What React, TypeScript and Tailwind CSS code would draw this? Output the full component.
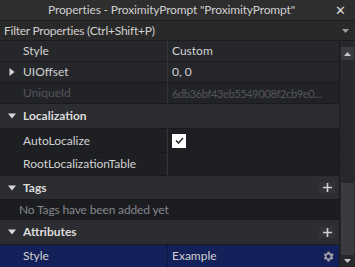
import React from "react";

const font = { fontFamily: "Lato, 'Open Sans', sans-serif" };

const Caret = ({ open }: { open: boolean }) => (
	<svg width="8" height="8" viewBox="0 0 8 8" className="shrink-0">
		{open ? <path d="M0 1.5 H8 L4 6.5 Z" fill="#d8d8d8" /> : <path d="M1.5 0 V8 L6.5 4 Z" fill="#d8d8d8" />}
	</svg>
);

const PlusBox = () => (
	<div className="w-[16px] h-[11px] bg-[#323338] flex items-center justify-center">
		<svg width="9" height="9" viewBox="0 0 9 9">
			<path d="M4.5 0 V9 M0 4.5 H9" stroke="#d0d0d0" strokeWidth="1.6" />
		</svg>
	</div>
);

const Gear = () => (
	<svg width="13" height="13" viewBox="0 0 24 24" fill="#a0a1a6">
		<path d="M19.4 13a7.5 7.5 0 0 0 0-2l2.1-1.6-2-3.5-2.5 1a7 7 0 0 0-1.7-1L14 3h-4l-.4 2.9a7 7 0 0 0-1.7 1l-2.5-1-2 3.5L5.6 11a7.5 7.5 0 0 0 0 2l-2.1 1.6 2 3.5 2.5-1a7 7 0 0 0 1.7 1L10 21h4l.4-2.9a7 7 0 0 0 1.7-1l2.5 1 2-3.5zM12 15.5a3.5 3.5 0 1 1 0-7 3.5 3.5 0 0 1 0 7z" />
	</svg>
);

type RowProps = {
	name: string;
	value?: React.ReactNode;
	h: string;
	bg: string;
	dim?: boolean;
	caret?: boolean;
};

const Row = ({ name, value, h, bg, dim, caret }: RowProps) => (
	<div className={`flex ${h} ${bg} border-b border-[#1a1b1e]`}>
		<div className="w-[168px] shrink-0 flex items-center border-r border-[#35363b]">
			<div className="w-[23px] flex justify-center pl-[1px]">{caret && <Caret open={false} />}</div>
			<span className={dim ? "text-[#55565c]" : "text-[#d2d2d2]"}>{name}</span>
		</div>
		<div className={`flex-1 min-w-0 overflow-hidden whitespace-nowrap flex items-center pl-[4px] ${dim ? "text-[#55565c]" : "text-[#d2d2d2]"}`}>
			{value}
		</div>
	</div>
);

const Header = ({ title, h, plus }: { title: string; h: string; plus?: boolean }) => (
	<div className={`flex items-center ${h} bg-[#2c2d31] border-b border-[#1a1b1e]`}>
		<div className="w-[23px] flex justify-center pl-[1px]">
			<Caret open />
		</div>
		<span className="font-bold text-[#dcdcdc]">{title}</span>
		<div className="flex-1" />
		{plus && (
			<div className="pr-[4px]">
				<PlusBox />
			</div>
		)}
	</div>
);

export default function App() {
	return (
		<div className="w-[355px] h-[267px] overflow-hidden bg-[#2b2b2b] flex flex-col text-[12px] leading-none" style={font}>
			<div className="h-[20px] shrink-0 bg-[#2e2e2e] relative flex items-center justify-center text-[#cfcfcf] text-[12px] tracking-[-0.15px] pr-[12px]">
				<span>Properties - ProximityPrompt "ProximityPrompt"</span>
				<span className="absolute right-[9px] top-[4px] text-[13px] text-[#d8d8d8]">✕</span>
			</div>
			<div className="h-[21px] shrink-0 bg-[#292929] border-y border-[#1c1c1c] flex items-center pl-[4px] pr-[6px] text-[#d0d0d0]">
				<span className="flex-1 tracking-[-0.25px]">Filter Properties (Ctrl+Shift+P)</span>
				<svg width="7" height="4" viewBox="0 0 7 4">
					<path d="M0 0 H7 L3.5 4 Z" fill="#9a9a9a" />
				</svg>
			</div>
			<div className="flex flex-1 min-h-0">
				<div className="flex-1 min-w-0 flex flex-col border-r border-[#1a1b1e]">
					<Row name="Style" value="Custom" h="h-[21px]" bg="bg-[#26272b]" />
					<Row name="UIOffset" value="0, 0" h="h-[21px]" bg="bg-[#26272b]" caret />
					<Row
						name="UniqueId"
						value={<span className="text-[11px] tracking-[-0.35px]">6db36bf43eb5549008f2cb9e0...</span>}
						h="h-[21px]"
						bg="bg-[#222327]"
						dim
					/>
					<Header title="Localization" h="h-[25px]" />
					<Row
						name="AutoLocalize"
						h="h-[24px]"
						bg="bg-[#1e1f22]"
						value={
							<div className="w-[14px] h-[14px] bg-white flex items-center justify-center">
								<svg width="9" height="7" viewBox="0 0 9 7">
									<path d="M1 3.5 L3.5 6 L8 1" stroke="#222" strokeWidth="1.5" fill="none" />
								</svg>
							</div>
						}
					/>
					<Row name="RootLocalizationTable" h="h-[23px]" bg="bg-[#1e1f22]" />
					<Header title="Tags" h="h-[24px]" plus />
					<div className="h-[20px] bg-[#1c1d20] flex items-center pl-[19px] text-[#85868c] tracking-[-0.15px]">No Tags have been added yet</div>
					<Header title="Attributes" h="h-[25px]" plus />
					<div className="flex h-[22px] bg-[#13205a]">
						<div className="w-[168px] shrink-0 flex items-center border-r border-[#0c1640] pl-[23px] text-[#d2d2d2]">Style</div>
						<div className="flex-1 flex items-center pl-[4px] pr-[4px] text-[#d2d2d2]">
							<span className="flex-1">Example</span>
							<Gear />
						</div>
					</div>
				</div>
				<div className="w-[15px] shrink-0 bg-[#27282c] flex flex-col items-center pt-[6px]">
					<div className="w-[13px] h-[13px] bg-[#3a3b40] flex items-center justify-center">
						<svg width="7" height="4" viewBox="0 0 7 4">
							<path d="M0 4 H7 L3.5 0 Z" fill="#c8c8c8" />
						</svg>
					</div>
					<div className="flex-1" />
					<div className="w-[13px] h-[72px] bg-[#3a3b41]" />
					<div className="w-[13px] h-[12px] flex items-center justify-center">
						<svg width="7" height="4" viewBox="0 0 7 4">
							<path d="M0 0 H7 L3.5 4 Z" fill="#c8c8c8" />
						</svg>
					</div>
				</div>
			</div>
		</div>
	);
}
